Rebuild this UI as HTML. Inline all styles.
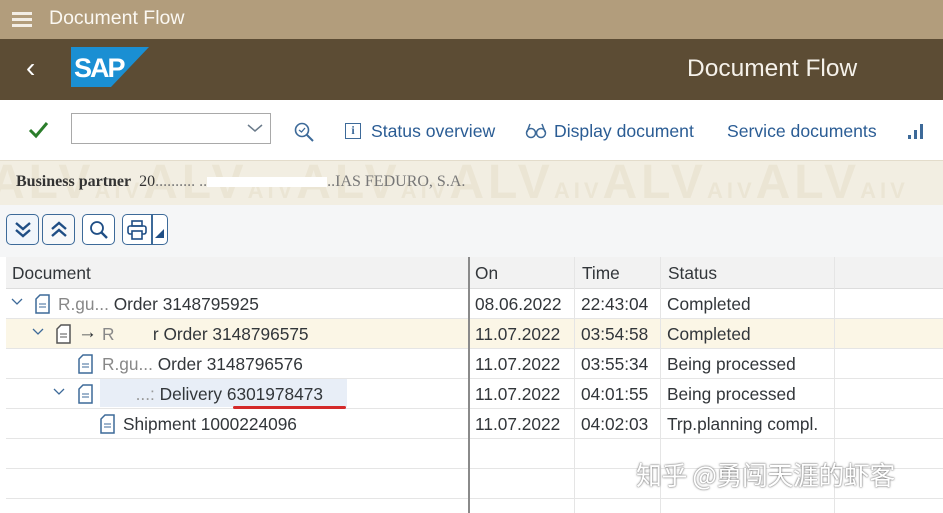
<!DOCTYPE html>
<html><head><meta charset="utf-8"><style>
*{margin:0;padding:0;box-sizing:border-box}
body{width:943px;height:513px;overflow:hidden;background:#fff;font-family:"Liberation Sans","Noto Sans CJK SC",sans-serif;position:relative}
.a{position:absolute}
.t{font-size:17.3px;color:#32363a;white-space:nowrap}
.lnk{font-size:17.6px;color:#2a5c94;white-space:nowrap}
.hl{position:absolute;left:6px;width:937px;height:1px;background:#e5e5e5}
.vl{position:absolute;width:1px;background:#e5e5e5;top:257px;height:256px}
.btn{position:absolute;top:214px;height:31px;border:1.5px solid #3d6a99;border-radius:5px;background:#f0f5fb}
</style></head><body>
<div class="a" style="left:0;top:0;width:943px;height:39px;background:#b29d7c"></div>
<div class="a" style="left:12px;top:12px;width:20px;height:3px;background:#f3eee6;box-shadow:0 6px 0 #f3eee6,0 12px 0 #f3eee6"></div>
<div class="a" style="left:49px;top:7px;font-size:19.5px;color:#fbf8f2">Document Flow</div>
<div class="a" style="left:0;top:39px;width:943px;height:61px;background:#5c4c34"></div>
<div class="a" style="left:26px;top:52px;font-size:28px;color:#fff">&#8249;</div>
<svg class="a" style="left:71px;top:47px" width="78" height="40"><polygon points="0,0 78,0 40,40 0,40" fill="#1a8fd3"/><text x="3" y="30" font-family="Liberation Sans" font-weight="bold" font-size="27" fill="#fff" letter-spacing="-2">SAP</text></svg>
<div class="a" style="left:687px;top:55px;font-size:24.5px;color:#f5f1ea">Document Flow</div>
<svg class="a" style="left:28px;top:120px" width="22" height="20"><path d="M2 10 L8 16 L19 3" stroke="#2b7d2b" stroke-width="3" fill="none"/></svg>
<div class="a" style="left:71px;top:113px;width:200px;height:31px;border:1px solid #a9a9a9;background:#fff"></div>
<svg class="a" style="left:246px;top:122px" width="18" height="12"><path d="M2 3 L9 9 L16 3" stroke="#6a7a8a" fill="none" stroke-width="1.5"/></svg>
<svg class="a" style="left:293px;top:121px" width="22" height="22"><circle cx="9" cy="9" r="6.5" stroke="#3d6a99" stroke-width="1.6" fill="none"/><path d="M14 14 L20 20" stroke="#3d6a99" stroke-width="2"/><path d="M6 9 L8.5 11 L12 7" stroke="#3d6a99" stroke-width="1.3" fill="none"/></svg>
<div class="a" style="left:345px;top:123px;width:16px;height:16px;border:1.5px solid #3d6a99;font-size:12px;font-weight:bold;color:#3d6a99;text-align:center;line-height:13px;font-family:'Liberation Serif',serif">i</div>
<div class="a lnk" style="left:371px;top:121px">Status overview</div>
<svg class="a" style="left:525px;top:122px" width="22" height="18"><circle cx="6" cy="11" r="4.5" stroke="#3d6a99" stroke-width="1.5" fill="none"/><circle cx="16" cy="11" r="4.5" stroke="#3d6a99" stroke-width="1.5" fill="none"/><path d="M2 10 L5 2 M20 10 L17 2" stroke="#3d6a99" stroke-width="1.5"/></svg>
<div class="a lnk" style="left:554px;top:121px">Display document</div>
<div class="a lnk" style="left:727px;top:121px">Service documents</div>
<svg class="a" style="left:907px;top:122px" width="20" height="18"><rect x="1" y="13" width="3" height="4" fill="#3d6a99"/><rect x="7" y="8" width="3" height="9" fill="#3d6a99"/><rect x="13" y="2" width="3" height="15" fill="#3d6a99"/></svg>
<div class="a" style="left:0;top:160px;width:943px;height:45px;background:#f2eee2;border-top:1px solid #e3dccb"></div>
<div class="a" style="left:-10px;top:160px;width:953px;height:45px;overflow:hidden;font-size:48px;font-weight:bold;color:#ebe5d4;letter-spacing:4px;white-space:nowrap;line-height:45px">ALV<span style="font-size:22px">AIV</span>ALV<span style="font-size:22px">AIV</span>ALV<span style="font-size:22px">AIV</span>ALV<span style="font-size:22px">AIV</span>ALV<span style="font-size:22px">AIV</span>ALV<span style="font-size:22px">AIV</span></div>
<div class="a" style="left:16px;top:173px;font-family:'Liberation Serif',serif;font-size:16px;color:#333;white-space:nowrap"><b>Business partner</b>&nbsp; 20<span style="color:#777">.......... ..</span><span style="display:inline-block;width:120px;height:10px;background:#fff;vertical-align:middle"></span><span style="color:#777">..IAS FEDURO, S.A.</span></div>
<div class="a" style="left:770px;top:200px;font-size:12px;color:#2a4c7a;font-weight:bold">....</div>
<div class="a" style="left:0;top:205px;width:943px;height:52px;background:#f5f6f7"></div>
<div class="btn" style="left:6px;width:33px"></div>
<div class="btn" style="left:42px;width:33px;background:#f7f8f9"></div>
<div class="btn" style="left:82px;width:33px;background:#fff"></div>
<div class="btn" style="left:122px;width:46px;background:#fff"></div>
<div class="a" style="left:151px;top:215px;width:1.5px;height:29px;background:#3d6a99"></div>
<svg class="a" style="left:12px;top:219px" width="22" height="22"><path d="M4 4 L11 10 L18 4 M4 11 L11 17 L18 11" stroke="#1f4e85" stroke-width="2.4" fill="none"/></svg>
<svg class="a" style="left:48px;top:219px" width="22" height="22"><path d="M4 10 L11 4 L18 10 M4 17 L11 11 L18 17" stroke="#1f4e85" stroke-width="2.4" fill="none"/></svg>
<svg class="a" style="left:88px;top:219px" width="22" height="22"><circle cx="9" cy="9" r="6" stroke="#1f4e85" stroke-width="1.8" fill="none"/><path d="M13 13 L19 19" stroke="#1f4e85" stroke-width="2.4"/></svg>
<svg class="a" style="left:126px;top:219px" width="22" height="22"><rect x="6" y="2" width="10" height="5" stroke="#1f4e85" stroke-width="1.6" fill="none"/><rect x="2" y="7" width="18" height="8" rx="2" stroke="#1f4e85" stroke-width="1.6" fill="none"/><rect x="6" y="12" width="10" height="8" stroke="#1f4e85" stroke-width="1.6" fill="#fff"/></svg>
<svg class="a" style="left:155px;top:229px" width="10" height="10"><polygon points="9,0 9,9 0,9" fill="#1f4e85"/></svg>
<div class="a" style="left:6px;top:257px;width:937px;height:31px;background:#f2f2f2"></div>
<div class="a" style="left:6px;top:319px;width:937px;height:29px;background:#fbf6e6"></div>
<div class="a" style="left:100px;top:379px;width:247px;height:28px;background:#e8eef7"></div>
<div class="hl" style="top:288px;background:#ddd"></div>
<div class="hl" style="top:318px"></div><div class="hl" style="top:348px"></div><div class="hl" style="top:378px"></div><div class="hl" style="top:408px"></div><div class="hl" style="top:438px"></div><div class="hl" style="top:468px"></div><div class="hl" style="top:498px"></div>
<div class="vl" style="left:468px;width:2px;background:#8a8a8a"></div>
<div class="vl" style="left:574px"></div><div class="vl" style="left:660px"></div><div class="vl" style="left:834px"></div>
<div class="a t" style="left:12px;top:263px">Document</div>
<div class="a t" style="left:475px;top:263px">On</div>
<div class="a t" style="left:582px;top:263px">Time</div>
<div class="a t" style="left:668px;top:263px">Status</div>
<svg class="a" style="left:10px;top:295px" width="14" height="14"><path d="M2 4 L7 9 L12 4" stroke="#3d6a99" stroke-width="1.3" fill="none"/></svg>
<svg class="a" style="left:31px;top:325px" width="14" height="14"><path d="M2 4 L7 9 L12 4" stroke="#3d6a99" stroke-width="1.3" fill="none"/></svg>
<svg class="a" style="left:52px;top:385px" width="14" height="14"><path d="M2 4 L7 9 L12 4" stroke="#3d6a99" stroke-width="1.3" fill="none"/></svg>
<svg class="a" style="left:35px;top:294px" width="16" height="20"><path d="M5 1 H14 V19 H1 V5 Z" stroke="#3d6a99" stroke-width="1.5" fill="#fff"/><path d="M4 10 H11 M4 13 H11" stroke="#3d6a99"/></svg>
<svg class="a" style="left:56px;top:324px" width="16" height="20"><path d="M5 1 H14 V19 H1 V5 Z" stroke="#555" stroke-width="1.5" fill="#fff"/><path d="M4 10 H11 M4 13 H11" stroke="#555"/></svg>
<svg class="a" style="left:78px;top:354px" width="16" height="20"><path d="M5 1 H14 V19 H1 V5 Z" stroke="#3d6a99" stroke-width="1.5" fill="#fff"/><path d="M4 10 H11 M4 13 H11" stroke="#3d6a99"/></svg>
<svg class="a" style="left:78px;top:384px" width="16" height="20"><path d="M5 1 H14 V19 H1 V5 Z" stroke="#3d6a99" stroke-width="1.5" fill="#fff"/><path d="M4 10 H11 M4 13 H11" stroke="#3d6a99"/></svg>
<svg class="a" style="left:100px;top:414px" width="16" height="20"><path d="M5 1 H14 V19 H1 V5 Z" stroke="#3d6a99" stroke-width="1.5" fill="#fff"/><path d="M4 10 H11 M4 13 H11" stroke="#3d6a99"/></svg>
<div class="a t" style="left:78px;top:322px;font-size:19px">&#8594;</div>
<div class="a t" style="left:58px;top:294px"><span style="color:#888">R.gu...</span> Order 3148795925</div>
<div class="a t" style="left:102px;top:324px"><span style="color:#888">R</span>&nbsp;&nbsp;&nbsp;&nbsp;&nbsp;&nbsp;&nbsp;&nbsp;r Order 3148796575</div>
<div class="a t" style="left:102px;top:354px"><span style="color:#888">R.gu...</span> Order 3148796576</div>
<div class="a t" style="left:102px;top:384px"><span style="color:#999">&nbsp;&nbsp;&nbsp;&nbsp;&nbsp;&nbsp;&nbsp;...:</span> Delivery 6301978473</div>
<div class="a" style="left:233px;top:406px;width:113px;height:3px;background:#d42a2a;border-radius:2px"></div>
<div class="a t" style="left:123px;top:414px">Shipment 1000224096</div>
<div class="a t" style="left:475px;top:294px">08.06.2022</div><div class="a t" style="left:581px;top:294px">22:43:04</div><div class="a t" style="left:667px;top:294px">Completed</div>
<div class="a t" style="left:475px;top:324px">11.07.2022</div><div class="a t" style="left:581px;top:324px">03:54:58</div><div class="a t" style="left:667px;top:324px">Completed</div>
<div class="a t" style="left:475px;top:354px">11.07.2022</div><div class="a t" style="left:581px;top:354px">03:55:34</div><div class="a t" style="left:667px;top:354px">Being processed</div>
<div class="a t" style="left:475px;top:384px">11.07.2022</div><div class="a t" style="left:581px;top:384px">04:01:55</div><div class="a t" style="left:667px;top:384px">Being processed</div>
<div class="a t" style="left:475px;top:414px">11.07.2022</div><div class="a t" style="left:581px;top:414px">04:02:03</div><div class="a t" style="left:667px;top:414px">Trp.planning compl.</div>
<div class="a" style="left:636px;top:456px;font-size:26px;color:#fff;white-space:nowrap;text-shadow:0 0 2px #666,0 0 1px #888;font-family:'Noto Sans CJK SC',sans-serif;letter-spacing:-0.5px">知乎 @勇闯天涯的虾客</div>
</body></html>
